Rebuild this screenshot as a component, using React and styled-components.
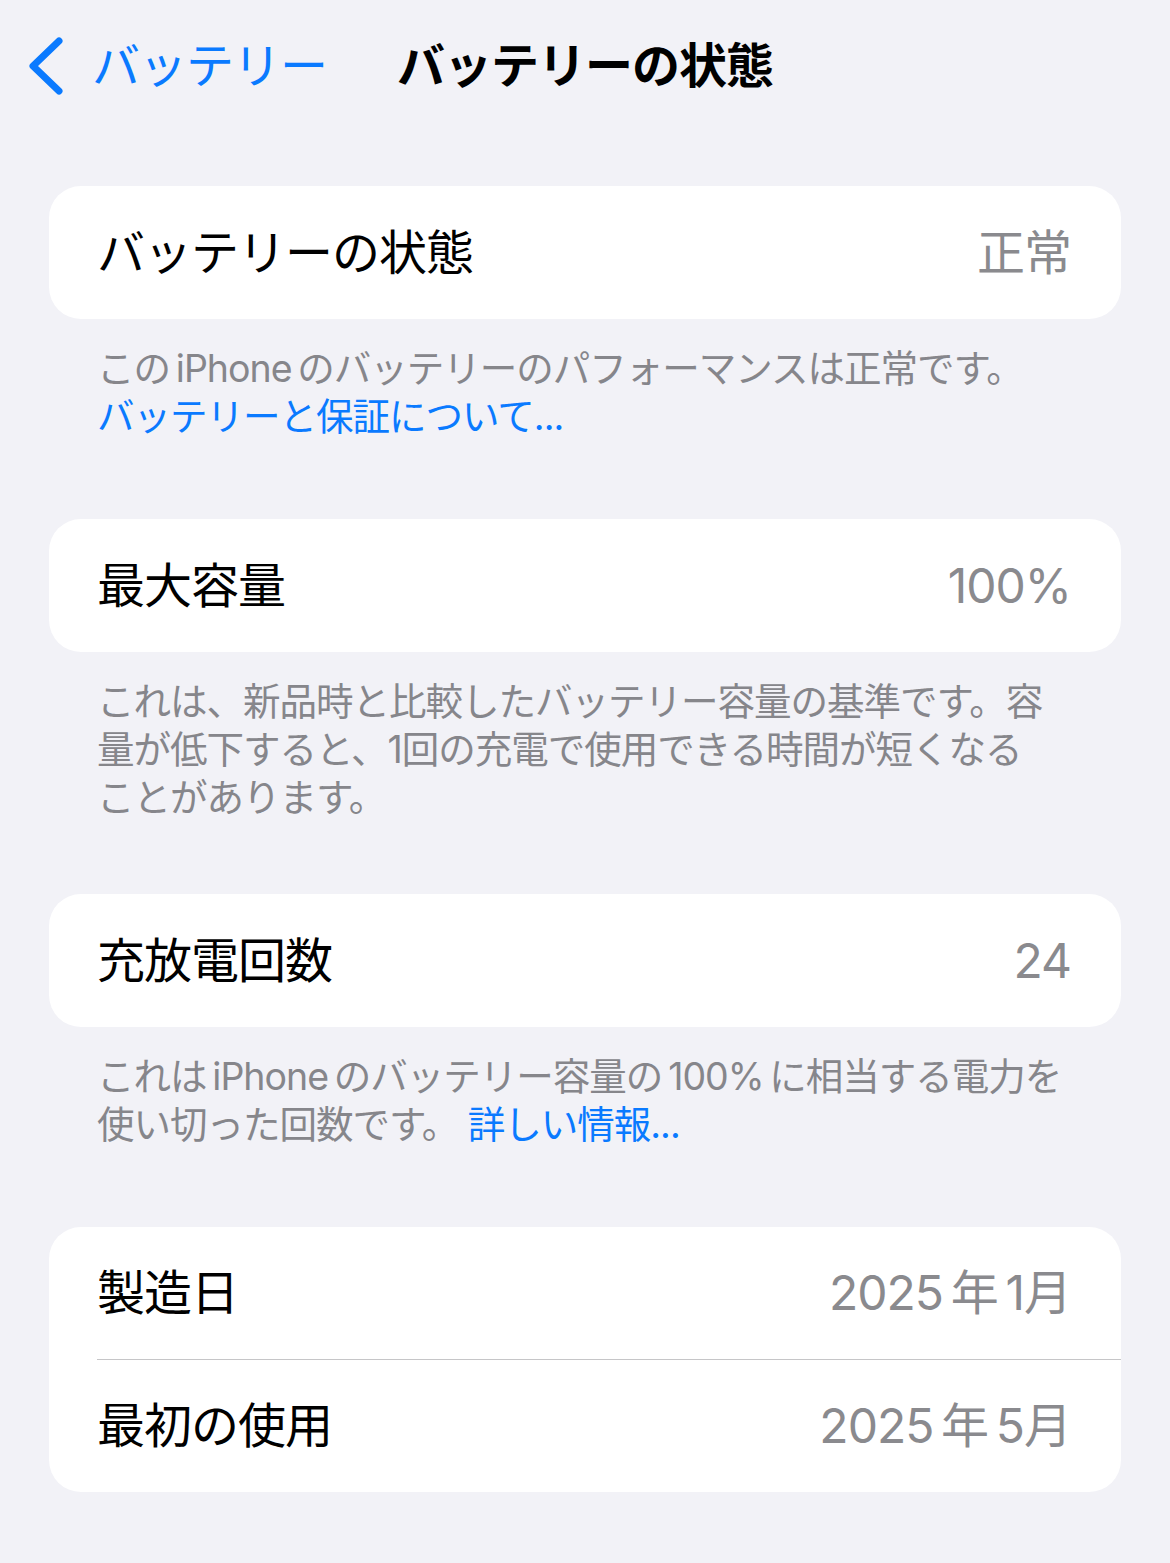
import React from "react";
import styled, { createGlobalStyle } from "styled-components";

const Global = createGlobalStyle`
  html, body {
    margin: 0;
    padding: 0;
    background: #f2f2f7;
  }
  body {
    font-family: "Inter", "Noto Sans CJK JP", "Noto Sans", sans-serif;
    -webkit-font-smoothing: antialiased;
  }
`;

const Page = styled.div`
  width: 1170px;
  min-height: 1563px;
  background: #f2f2f7;
  box-sizing: border-box;
`;

const NavBar = styled.div`
  height: 132px;
  display: grid;
  grid-template-columns: 1fr auto 1fr;
  align-items: center;
`;

const BackButton = styled.div`
  display: flex;
  align-items: center;
  gap: 26px;
  padding-left: 26px;
  color: #0a7aff;
  font-size: 48px;
  letter-spacing: -1px;
  line-height: 1;
`;

const Title = styled.div`
  font-size: 48px;
  font-weight: 700;
  letter-spacing: -1px;
  color: #000;
  line-height: 1;
`;

const Content = styled.div`
  padding: 54px 49px 0;
`;

const Section = styled.section`
  margin-bottom: ${(p) => p.$gap}px;
`;

const Card = styled.div`
  background: #fff;
  border-radius: 32px;
  overflow: hidden;
`;

const Row = styled.div`
  height: ${(p) => p.$h || 133}px;
  padding: 0 50px 0 48px;
  display: flex;
  align-items: center;
  justify-content: space-between;
  font-size: 48px;
  letter-spacing: -1px;
  line-height: 1;
`;

const Label = styled.span`
  color: #000;
`;

const Value = styled.span`
  color: #8a8a8e;
`;

const Separator = styled.div`
  height: 1px;
  margin-left: 48px;
  background: #c6c6c8;
`;

const Footer = styled.p`
  margin: 0;
  padding: 26px 48px 0;
  font-size: 37.5px;
  letter-spacing: -1px;
  line-height: 48px;
  color: #86868b;
`;

const Link = styled.span`
  color: #0a7aff;
`;

const Chevron = () => (
  <svg width="40" height="58" viewBox="0 0 40 58" fill="none">
    <path
      d="M33 4 L7 29 L33 54"
      stroke="#0a7aff"
      strokeWidth="7"
      strokeLinecap="round"
      strokeLinejoin="round"
    />
  </svg>
);

export default function App() {
  return (
    <Page>
      <Global />
      <NavBar>
        <BackButton>
          <Chevron />
          <span>バッテリー</span>
        </BackButton>
        <Title>バッテリーの状態</Title>
        <div />
      </NavBar>
      <Content>
        <Section $gap={78}>
          <Card>
            <Row>
              <Label>バッテリーの状態</Label>
              <Value>正常</Value>
            </Row>
          </Card>
          <Footer>
            この&#8201;iPhone&#8201;のバッテリーのパフォーマンスは正常です。
            <br />
            <Link>バッテリーと保証について...</Link>
          </Footer>
        </Section>

        <Section $gap={72}>
          <Card>
            <Row>
              <Label>最大容量</Label>
              <Value>100%</Value>
            </Row>
          </Card>
          <Footer>
            これは、新品時と比較したバッテリー容量の基準です。容
            <br />
            量が低下すると、1回の充電で使用できる時間が短くなる
            <br />
            ことがあります。
          </Footer>
        </Section>

        <Section $gap={78}>
          <Card>
            <Row>
              <Label>充放電回数</Label>
              <Value>24</Value>
            </Row>
          </Card>
          <Footer>
            これは&#8201;iPhone&#8201;のバッテリー容量の&#8201;100%&#8201;に相当する電力を
            <br />
            使い切った回数です。 <Link>詳しい情報...</Link>
          </Footer>
        </Section>

        <Section $gap={0}>
          <Card>
            <Row $h={132}>
              <Label>製造日</Label>
              <Value>2025&#8201;年&#8201;1月</Value>
            </Row>
            <Separator />
            <Row $h={132}>
              <Label>最初の使用</Label>
              <Value>2025&#8201;年&#8201;5月</Value>
            </Row>
          </Card>
        </Section>
      </Content>
    </Page>
  );
}
